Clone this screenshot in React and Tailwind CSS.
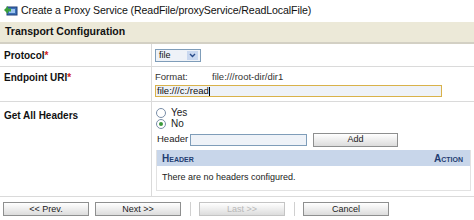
import React from 'react';

const Btn = ({ label, disabled, className = '' }) => (
  <button
    className={`h-[14px] border border-[#8e8f8f] bg-gradient-to-b from-white to-[#dcdcdc] text-[9px] leading-none ${disabled ? 'text-[#b8b8b8] border-[#c4c4c4]' : 'text-[#222]'} ${className}`}
  >
    {label}
  </button>
);

const Radio = ({ checked, label }) => (
  <div className="flex items-center gap-[5px] h-[11px]">
    <span className="w-[10px] h-[10px] rounded-full border border-[#7a8ea8] bg-white flex items-center justify-center">
      {checked && <span className="w-[4px] h-[4px] rounded-full bg-[#3c9a3c]" />}
    </span>
    <span className="text-[10px] text-[#222]">{label}</span>
  </div>
);

const App = () => {
  return (
    <div className="w-[474px] h-[220px] bg-white overflow-hidden text-[#111]" style={{ fontFamily: '"Liberation Sans", Arial, sans-serif' }}>
      {/* title */}
      <div className="h-[22px] flex items-center pl-[4px] gap-[3px]">
        <svg width="14" height="12" viewBox="0 0 14 12">
          <rect x="3" y="2" width="10" height="8" fill="#3a6fb8" stroke="#1f3f78" strokeWidth="1" />
          <rect x="5" y="4" width="6" height="4" fill="#9cc3ee" />
          <path d="M0 5 L4 1 L4 3.5 L7 3.5 L7 6.5 L4 6.5 L4 9 Z" fill="#3aa03a" />
        </svg>
        <span className="text-[10.6px] tracking-[-0.1px]">Create a Proxy Service (ReadFile/proxyService/ReadLocalFile)</span>
      </div>

      {/* section header */}
      <div className="h-[22px] bg-[#ece9d8] border-b-2 border-[#d3d0c4] flex items-center px-[5px]">
        <span className="text-[10.5px] font-bold">Transport Configuration</span>
      </div>

      <div className="grid grid-cols-[152px_1fr]">
        {/* Protocol */}
        <div className="h-[23px] border-b border-r border-[#dadada] flex items-center pl-[4px] text-[10px] font-bold">
          Protocol<span className="text-[#d02020]">*</span>
        </div>
        <div className="h-[23px] border-b border-[#dadada] flex items-center pl-[3px]">
          <div className="w-[46px] h-[13px] border border-[#7f9db9] bg-[#eef2f8] flex items-center justify-between pl-[3px] pr-[2px]">
            <span className="text-[9px] leading-none">file</span>
            <span className="w-[11px] h-[9px] bg-[#c9d8f0] flex items-center justify-center">
              <svg width="7" height="5" viewBox="0 0 7 5"><path d="M1 1 L3.5 3.5 L6 1" fill="none" stroke="#2a4d8c" strokeWidth="1.4" /></svg>
            </span>
          </div>
        </div>

        {/* Endpoint */}
        <div className="h-[35px] border-b border-r border-[#dadada] pl-[4px] pt-[3px] text-[10px] font-bold">
          Endpoint URI<span className="text-[#d02020]">*</span>
        </div>
        <div className="h-[35px] border-b border-[#dadada] pl-[3px] pt-[4px]">
          <div className="flex text-[9.5px] text-[#333] h-[13px] items-center">
            <span className="w-[57px]">Format:</span>
            <span>file:///root-dir/dir1</span>
          </div>
          <div className="w-[287px] h-[12px] border border-[#d9b24a] bg-[#eef2f8] flex items-center text-[9.5px] pl-[1px] mt-[1px]">
            file:///c:/read<span className="w-px h-[9px] bg-black" />
          </div>
        </div>

        {/* Get All Headers */}
        <div className="h-[95px] border-b border-r border-[#dadada] pl-[4px] pt-[6px] text-[10px] font-bold">
          Get All Headers
        </div>
        <div className="h-[95px] border-b border-[#dadada] pl-[4px] pt-[5px] pr-[3px]">
          <Radio label="Yes" />
          <Radio checked label="No" />
          <div className="flex items-center mt-[4px] h-[13px]">
            <span className="text-[9.5px] text-[#222] w-[34px] pl-[1px]">Header</span>
            <div className="w-[117px] h-[12px] border border-[#7f9db9] bg-[#eef2f8]" />
            <Btn label="Add" className="w-[85px] ml-[6px]" />
          </div>
          <div className="mt-[4px] border-x border-b border-[#e2e2e2]">
            <div className="h-[16px] bg-[#c8d6ea] flex items-center justify-between pl-[5px] pr-[7px] text-[10px] font-bold text-[#1f3d72] [font-variant:small-caps]">
              <span>Header</span>
              <span>Action</span>
            </div>
            <div className="h-[24px] flex items-center pl-[5px] text-[9px] text-[#222]">
              There are no headers configured.
            </div>
          </div>
        </div>
      </div>

      {/* footer buttons */}
      <div className="flex items-center h-[22px] pl-[3px] pt-[2px]">
        <Btn label="<< Prev." className="w-[86px]" />
        <Btn label="Next >>" className="w-[86px] ml-[6px]" />
        <span className="w-px h-[14px] bg-[#d0d0d0] ml-[9px]" />
        <Btn label="Last >>" disabled className="w-[86px] ml-[8px]" />
        <span className="w-px h-[14px] bg-[#d0d0d0] ml-[9px]" />
        <Btn label="Cancel" className="w-[86px] ml-[8px]" />
      </div>
    </div>
  );
};

export default App;
